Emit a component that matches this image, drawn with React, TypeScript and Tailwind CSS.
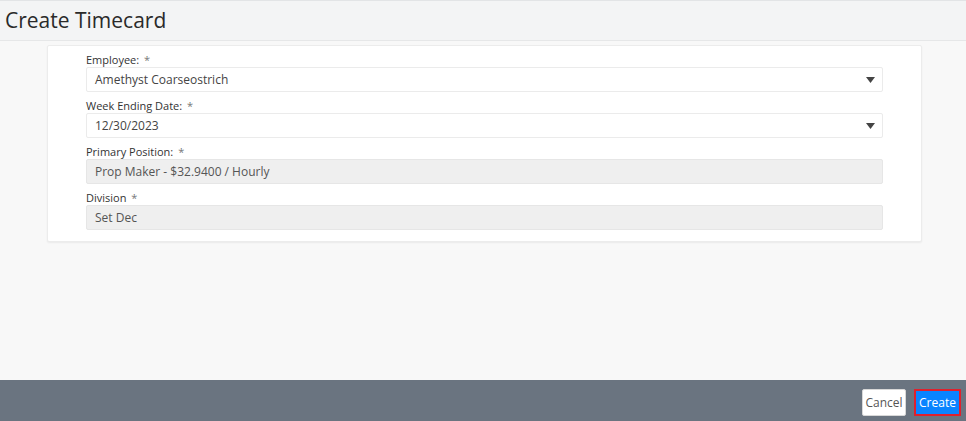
import React from "react";

interface FieldProps {
  label: string;
  value: string;
  select?: boolean;
}

const Field: React.FC<FieldProps> = ({ label, value, select }) => {
  return (
    <div>
      <div className="pt-[6px] h-[21px] text-[11px] leading-[15px] font-medium text-[#333]">
        {label} <span className="ml-[2px] text-[#777]">*</span>
      </div>
      <div
        className={
          select
            ? "h-[25px] flex items-center justify-between pl-[8px] pr-[6px] border border-[#ebebeb] rounded-[2px] bg-white text-[12px] text-[#444]"
            : "h-[25px] flex items-center pl-[8px] border border-[#e6e6e6] rounded-[2px] bg-[#efefef] text-[12px] text-[#555]"
        }
      >
        <span>{value}</span>
        {select && (
          <svg width="9" height="6" viewBox="0 0 9 6" className="mr-[1px]">
            <path d="M0 0 H9 L4.5 6 Z" fill="#444" />
          </svg>
        )}
      </div>
    </div>
  );
};

const App: React.FC = () => {
  return (
    <div
      className="h-screen flex flex-col bg-[#f8f8f8]"
      style={{ fontFamily: '"Open Sans", "Noto Sans", sans-serif' }}
    >
      <div className="h-[41px] shrink-0 flex items-center border-t border-t-[#e2e4e6] border-b border-b-[#e6e7e8] bg-[#f3f4f5] pl-[5px]">
        <h1 className="text-[21px] text-[#2a2a2a] leading-none">Create Timecard</h1>
      </div>
      <div className="flex-1 pt-[4px] pl-[47px] pr-[44px]">
        <div className="bg-white border border-[#ececec] rounded-[2px] shadow-[0_1px_2px_rgba(0,0,0,0.06)] px-[38px] pb-[11px]">
          <Field label="Employee:" value="Amethyst Coarseostrich" select />
          <Field label="Week Ending Date:" value="12/30/2023" select />
          <Field label="Primary Position:" value="Prop Maker - $32.9400 / Hourly" />
          <Field label="Division" value="Set Dec" />
        </div>
      </div>
      <div className="h-[41px] shrink-0 bg-[#6a7480] flex items-start justify-end gap-[8px] pt-[9px] pr-[5px]">
        <button className="h-[27px] w-[44px] bg-white border border-[#d8d8d8] rounded-[2px] text-[12px] text-[#555]">
          Cancel
        </button>
        <button className="h-[27px] w-[47px] bg-[#0a84ff] border-2 border-[#e0202c] text-[12px] text-white">
          Create
        </button>
      </div>
    </div>
  );
};

export default App;
